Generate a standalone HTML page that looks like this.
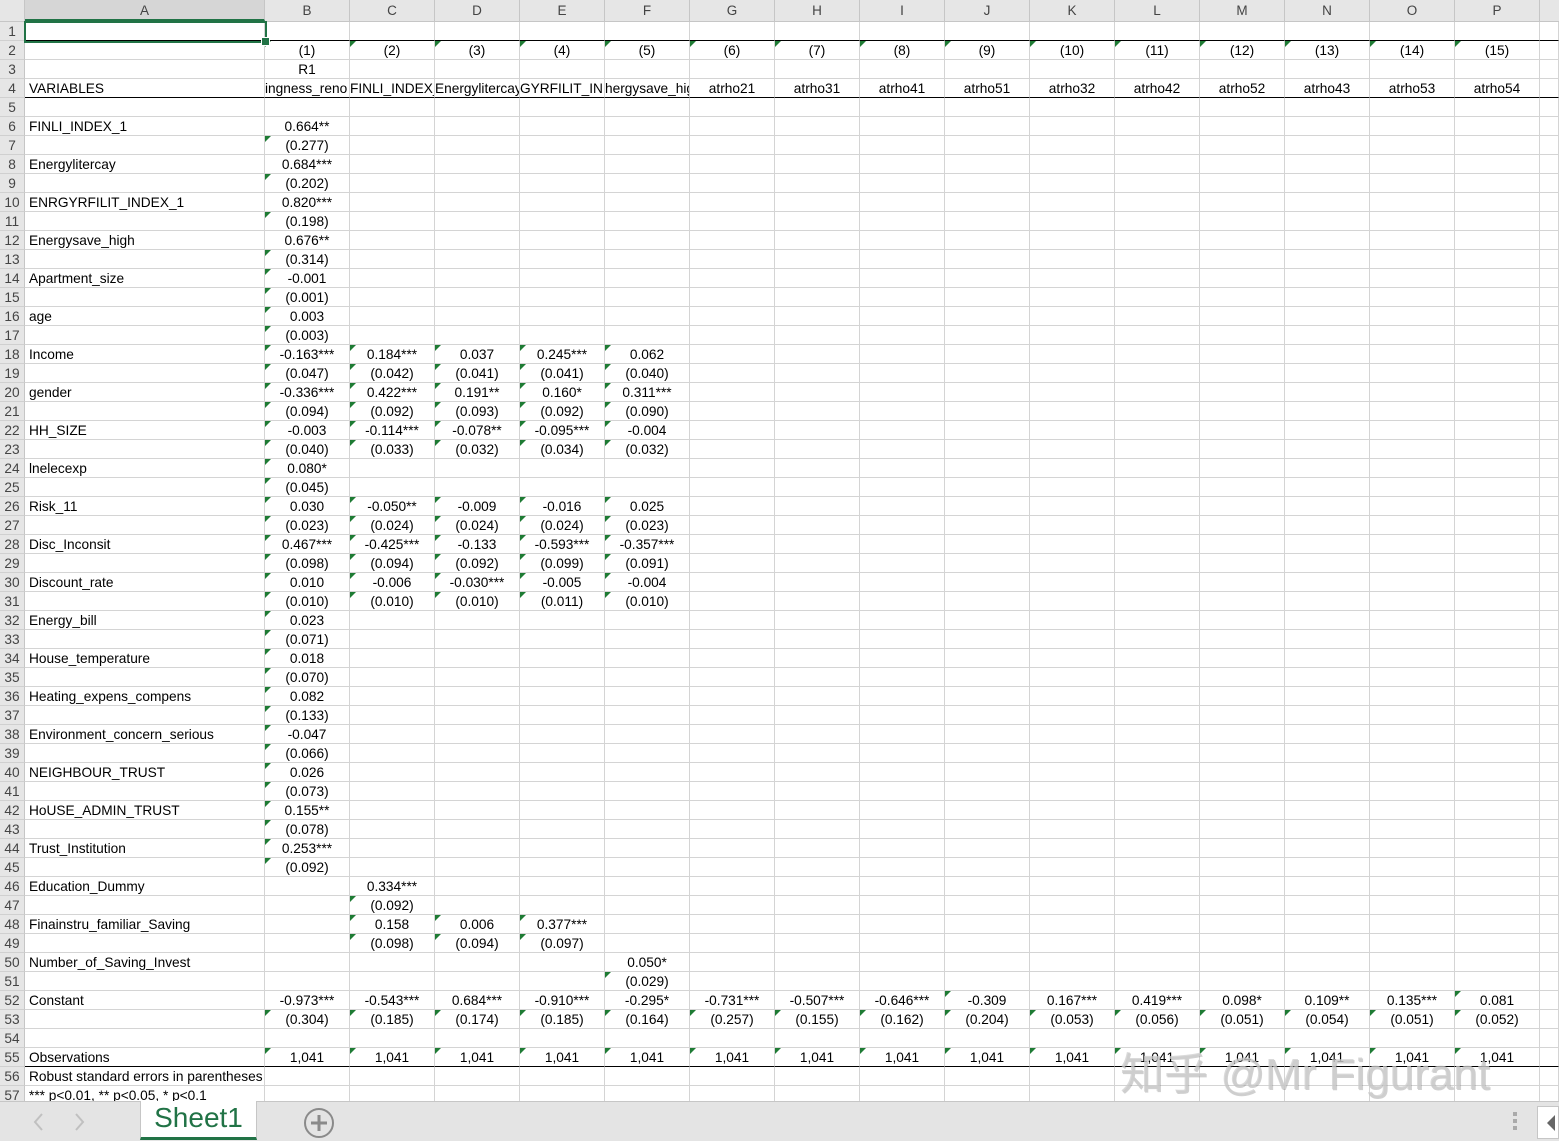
<!DOCTYPE html>
<html><head><meta charset="utf-8"><style>
*{margin:0;padding:0;box-sizing:border-box}
body{width:1559px;height:1141px;overflow:hidden;background:#fff;font-family:"Liberation Sans",Arial,sans-serif;font-size:13.7px;color:#000;position:relative}
.h{display:flex;height:22px;background:#e6e6e6;border-bottom:1px solid #c6c6c6}
.h span{display:block;border-right:1px solid #c6c6c6;text-align:center;line-height:21px;color:#444;font-size:13.5px}
.r{display:flex;height:19px}
.r i,.r u,.r em,.r b{display:block;height:19px;line-height:19px;font-style:normal;text-decoration:none;font-weight:normal;border-right:1px solid #d4d4d4;border-bottom:1px solid #d4d4d4;white-space:nowrap;overflow:hidden;position:relative}
.r i{width:25px;background:#e6e6e6;color:#444;text-align:center;border-right:1px solid #c6c6c6;border-bottom:1px solid #d0d0d0}
.r u{width:240px;padding-left:4px;overflow:visible;z-index:1}
.r em{width:85px;text-align:center}
.r b{width:19px}
.r em.t::before{content:"";position:absolute;left:0;top:0;border-top:6px solid #1e7b34;border-right:6px solid transparent}
.k u,.k em,.k b{border-bottom:1px solid #000}
#sel{position:absolute;left:24px;top:21px;width:243px;height:22px;border:2px solid #217346;z-index:3}
#sel::after{content:"";position:absolute;right:-5px;bottom:-5px;width:7px;height:7px;background:#217346;border:1px solid #fff}
#tabs{position:absolute;left:0;top:1101px;width:1559px;height:40px;background:#e4e4e4;border-top:1px solid #c6c6c6;z-index:4}
#sheet{position:absolute;left:140px;top:-1px;width:117px;height:39px;background:#fff;border:1px solid #c6c6c6;border-top:none;border-bottom:3px solid #217346;color:#217346;font-size:28px;text-align:center;line-height:34px}
#wm{position:absolute;left:1120px;top:1038px;font-size:44px;color:rgba(205,205,205,0.75);text-shadow:1px 1px 0 rgba(120,120,120,0.35);z-index:5;font-family:"Liberation Sans","Noto Sans CJK SC",sans-serif;white-space:nowrap}
</style></head><body>
<div class="h"><span style="width:25px"></span><span style="width:240px;background:#d6d6d6;border-bottom:2px solid #217346">A</span><span style="width:85px">B</span><span style="width:85px">C</span><span style="width:85px">D</span><span style="width:85px">E</span><span style="width:85px">F</span><span style="width:85px">G</span><span style="width:85px">H</span><span style="width:85px">I</span><span style="width:85px">J</span><span style="width:85px">K</span><span style="width:85px">L</span><span style="width:85px">M</span><span style="width:85px">N</span><span style="width:85px">O</span><span style="width:85px">P</span><span style="width:19px;border:none"></span></div>
<div class="r k"><i>1</i><u></u><em></em><em></em><em></em><em></em><em></em><em></em><em></em><em></em><em></em><em></em><em></em><em></em><em></em><em></em><em></em><b></b></div>
<div class="r"><i>2</i><u></u><em class=t>(1)</em><em class=t>(2)</em><em class=t>(3)</em><em class=t>(4)</em><em class=t>(5)</em><em class=t>(6)</em><em class=t>(7)</em><em class=t>(8)</em><em class=t>(9)</em><em class=t>(10)</em><em class=t>(11)</em><em class=t>(12)</em><em class=t>(13)</em><em class=t>(14)</em><em class=t>(15)</em><b></b></div>
<div class="r"><i>3</i><u></u><em>R1</em><em></em><em></em><em></em><em></em><em></em><em></em><em></em><em></em><em></em><em></em><em></em><em></em><em></em><em></em><b></b></div>
<div class="r k"><i>4</i><u>VARIABLES</u><em style="text-align:left">ingness_reno</em><em style="text-align:left">FINLI_INDEX_1</em><em style="text-align:left">Energylitercay</em><em style="text-align:left">GYRFILIT_IND</em><em style="text-align:left">hergysave_hig</em><em>atrho21</em><em>atrho31</em><em>atrho41</em><em>atrho51</em><em>atrho32</em><em>atrho42</em><em>atrho52</em><em>atrho43</em><em>atrho53</em><em>atrho54</em><b></b></div>
<div class="r"><i>5</i><u></u><em></em><em></em><em></em><em></em><em></em><em></em><em></em><em></em><em></em><em></em><em></em><em></em><em></em><em></em><em></em><b></b></div>
<div class="r"><i>6</i><u>FINLI_INDEX_1</u><em>0.664**</em><em></em><em></em><em></em><em></em><em></em><em></em><em></em><em></em><em></em><em></em><em></em><em></em><em></em><em></em><b></b></div>
<div class="r"><i>7</i><u></u><em class=t>(0.277)</em><em></em><em></em><em></em><em></em><em></em><em></em><em></em><em></em><em></em><em></em><em></em><em></em><em></em><em></em><b></b></div>
<div class="r"><i>8</i><u>Energylitercay</u><em>0.684***</em><em></em><em></em><em></em><em></em><em></em><em></em><em></em><em></em><em></em><em></em><em></em><em></em><em></em><em></em><b></b></div>
<div class="r"><i>9</i><u></u><em class=t>(0.202)</em><em></em><em></em><em></em><em></em><em></em><em></em><em></em><em></em><em></em><em></em><em></em><em></em><em></em><em></em><b></b></div>
<div class="r"><i>10</i><u>ENRGYRFILIT_INDEX_1</u><em>0.820***</em><em></em><em></em><em></em><em></em><em></em><em></em><em></em><em></em><em></em><em></em><em></em><em></em><em></em><em></em><b></b></div>
<div class="r"><i>11</i><u></u><em class=t>(0.198)</em><em></em><em></em><em></em><em></em><em></em><em></em><em></em><em></em><em></em><em></em><em></em><em></em><em></em><em></em><b></b></div>
<div class="r"><i>12</i><u>Energysave_high</u><em>0.676**</em><em></em><em></em><em></em><em></em><em></em><em></em><em></em><em></em><em></em><em></em><em></em><em></em><em></em><em></em><b></b></div>
<div class="r"><i>13</i><u></u><em class=t>(0.314)</em><em></em><em></em><em></em><em></em><em></em><em></em><em></em><em></em><em></em><em></em><em></em><em></em><em></em><em></em><b></b></div>
<div class="r"><i>14</i><u>Apartment_size</u><em class=t>-0.001</em><em></em><em></em><em></em><em></em><em></em><em></em><em></em><em></em><em></em><em></em><em></em><em></em><em></em><em></em><b></b></div>
<div class="r"><i>15</i><u></u><em class=t>(0.001)</em><em></em><em></em><em></em><em></em><em></em><em></em><em></em><em></em><em></em><em></em><em></em><em></em><em></em><em></em><b></b></div>
<div class="r"><i>16</i><u>age</u><em class=t>0.003</em><em></em><em></em><em></em><em></em><em></em><em></em><em></em><em></em><em></em><em></em><em></em><em></em><em></em><em></em><b></b></div>
<div class="r"><i>17</i><u></u><em class=t>(0.003)</em><em></em><em></em><em></em><em></em><em></em><em></em><em></em><em></em><em></em><em></em><em></em><em></em><em></em><em></em><b></b></div>
<div class="r"><i>18</i><u>Income</u><em class=t>-0.163***</em><em class=t>0.184***</em><em class=t>0.037</em><em class=t>0.245***</em><em class=t>0.062</em><em></em><em></em><em></em><em></em><em></em><em></em><em></em><em></em><em></em><em></em><b></b></div>
<div class="r"><i>19</i><u></u><em class=t>(0.047)</em><em class=t>(0.042)</em><em class=t>(0.041)</em><em class=t>(0.041)</em><em class=t>(0.040)</em><em></em><em></em><em></em><em></em><em></em><em></em><em></em><em></em><em></em><em></em><b></b></div>
<div class="r"><i>20</i><u>gender</u><em class=t>-0.336***</em><em class=t>0.422***</em><em class=t>0.191**</em><em class=t>0.160*</em><em class=t>0.311***</em><em></em><em></em><em></em><em></em><em></em><em></em><em></em><em></em><em></em><em></em><b></b></div>
<div class="r"><i>21</i><u></u><em class=t>(0.094)</em><em class=t>(0.092)</em><em class=t>(0.093)</em><em class=t>(0.092)</em><em class=t>(0.090)</em><em></em><em></em><em></em><em></em><em></em><em></em><em></em><em></em><em></em><em></em><b></b></div>
<div class="r"><i>22</i><u>HH_SIZE</u><em class=t>-0.003</em><em class=t>-0.114***</em><em class=t>-0.078**</em><em class=t>-0.095***</em><em class=t>-0.004</em><em></em><em></em><em></em><em></em><em></em><em></em><em></em><em></em><em></em><em></em><b></b></div>
<div class="r"><i>23</i><u></u><em class=t>(0.040)</em><em class=t>(0.033)</em><em class=t>(0.032)</em><em class=t>(0.034)</em><em class=t>(0.032)</em><em></em><em></em><em></em><em></em><em></em><em></em><em></em><em></em><em></em><em></em><b></b></div>
<div class="r"><i>24</i><u>lnelecexp</u><em class=t>0.080*</em><em></em><em></em><em></em><em></em><em></em><em></em><em></em><em></em><em></em><em></em><em></em><em></em><em></em><em></em><b></b></div>
<div class="r"><i>25</i><u></u><em class=t>(0.045)</em><em></em><em></em><em></em><em></em><em></em><em></em><em></em><em></em><em></em><em></em><em></em><em></em><em></em><em></em><b></b></div>
<div class="r"><i>26</i><u>Risk_11</u><em class=t>0.030</em><em class=t>-0.050**</em><em class=t>-0.009</em><em class=t>-0.016</em><em class=t>0.025</em><em></em><em></em><em></em><em></em><em></em><em></em><em></em><em></em><em></em><em></em><b></b></div>
<div class="r"><i>27</i><u></u><em class=t>(0.023)</em><em class=t>(0.024)</em><em class=t>(0.024)</em><em class=t>(0.024)</em><em class=t>(0.023)</em><em></em><em></em><em></em><em></em><em></em><em></em><em></em><em></em><em></em><em></em><b></b></div>
<div class="r"><i>28</i><u>Disc_Inconsit</u><em class=t>0.467***</em><em class=t>-0.425***</em><em class=t>-0.133</em><em class=t>-0.593***</em><em class=t>-0.357***</em><em></em><em></em><em></em><em></em><em></em><em></em><em></em><em></em><em></em><em></em><b></b></div>
<div class="r"><i>29</i><u></u><em class=t>(0.098)</em><em class=t>(0.094)</em><em class=t>(0.092)</em><em class=t>(0.099)</em><em class=t>(0.091)</em><em></em><em></em><em></em><em></em><em></em><em></em><em></em><em></em><em></em><em></em><b></b></div>
<div class="r"><i>30</i><u>Discount_rate</u><em class=t>0.010</em><em class=t>-0.006</em><em class=t>-0.030***</em><em class=t>-0.005</em><em class=t>-0.004</em><em></em><em></em><em></em><em></em><em></em><em></em><em></em><em></em><em></em><em></em><b></b></div>
<div class="r"><i>31</i><u></u><em class=t>(0.010)</em><em class=t>(0.010)</em><em class=t>(0.010)</em><em class=t>(0.011)</em><em class=t>(0.010)</em><em></em><em></em><em></em><em></em><em></em><em></em><em></em><em></em><em></em><em></em><b></b></div>
<div class="r"><i>32</i><u>Energy_bill</u><em class=t>0.023</em><em></em><em></em><em></em><em></em><em></em><em></em><em></em><em></em><em></em><em></em><em></em><em></em><em></em><em></em><b></b></div>
<div class="r"><i>33</i><u></u><em class=t>(0.071)</em><em></em><em></em><em></em><em></em><em></em><em></em><em></em><em></em><em></em><em></em><em></em><em></em><em></em><em></em><b></b></div>
<div class="r"><i>34</i><u>House_temperature</u><em class=t>0.018</em><em></em><em></em><em></em><em></em><em></em><em></em><em></em><em></em><em></em><em></em><em></em><em></em><em></em><em></em><b></b></div>
<div class="r"><i>35</i><u></u><em class=t>(0.070)</em><em></em><em></em><em></em><em></em><em></em><em></em><em></em><em></em><em></em><em></em><em></em><em></em><em></em><em></em><b></b></div>
<div class="r"><i>36</i><u>Heating_expens_compens</u><em class=t>0.082</em><em></em><em></em><em></em><em></em><em></em><em></em><em></em><em></em><em></em><em></em><em></em><em></em><em></em><em></em><b></b></div>
<div class="r"><i>37</i><u></u><em class=t>(0.133)</em><em></em><em></em><em></em><em></em><em></em><em></em><em></em><em></em><em></em><em></em><em></em><em></em><em></em><em></em><b></b></div>
<div class="r"><i>38</i><u>Environment_concern_serious</u><em class=t>-0.047</em><em></em><em></em><em></em><em></em><em></em><em></em><em></em><em></em><em></em><em></em><em></em><em></em><em></em><em></em><b></b></div>
<div class="r"><i>39</i><u></u><em class=t>(0.066)</em><em></em><em></em><em></em><em></em><em></em><em></em><em></em><em></em><em></em><em></em><em></em><em></em><em></em><em></em><b></b></div>
<div class="r"><i>40</i><u>NEIGHBOUR_TRUST</u><em class=t>0.026</em><em></em><em></em><em></em><em></em><em></em><em></em><em></em><em></em><em></em><em></em><em></em><em></em><em></em><em></em><b></b></div>
<div class="r"><i>41</i><u></u><em class=t>(0.073)</em><em></em><em></em><em></em><em></em><em></em><em></em><em></em><em></em><em></em><em></em><em></em><em></em><em></em><em></em><b></b></div>
<div class="r"><i>42</i><u>HoUSE_ADMIN_TRUST</u><em class=t>0.155**</em><em></em><em></em><em></em><em></em><em></em><em></em><em></em><em></em><em></em><em></em><em></em><em></em><em></em><em></em><b></b></div>
<div class="r"><i>43</i><u></u><em class=t>(0.078)</em><em></em><em></em><em></em><em></em><em></em><em></em><em></em><em></em><em></em><em></em><em></em><em></em><em></em><em></em><b></b></div>
<div class="r"><i>44</i><u>Trust_Institution</u><em class=t>0.253***</em><em></em><em></em><em></em><em></em><em></em><em></em><em></em><em></em><em></em><em></em><em></em><em></em><em></em><em></em><b></b></div>
<div class="r"><i>45</i><u></u><em class=t>(0.092)</em><em></em><em></em><em></em><em></em><em></em><em></em><em></em><em></em><em></em><em></em><em></em><em></em><em></em><em></em><b></b></div>
<div class="r"><i>46</i><u>Education_Dummy</u><em></em><em>0.334***</em><em></em><em></em><em></em><em></em><em></em><em></em><em></em><em></em><em></em><em></em><em></em><em></em><em></em><b></b></div>
<div class="r"><i>47</i><u></u><em></em><em class=t>(0.092)</em><em></em><em></em><em></em><em></em><em></em><em></em><em></em><em></em><em></em><em></em><em></em><em></em><em></em><b></b></div>
<div class="r"><i>48</i><u>Finainstru_familiar_Saving</u><em></em><em class=t>0.158</em><em class=t>0.006</em><em class=t>0.377***</em><em></em><em></em><em></em><em></em><em></em><em></em><em></em><em></em><em></em><em></em><em></em><b></b></div>
<div class="r"><i>49</i><u></u><em></em><em class=t>(0.098)</em><em class=t>(0.094)</em><em class=t>(0.097)</em><em></em><em></em><em></em><em></em><em></em><em></em><em></em><em></em><em></em><em></em><em></em><b></b></div>
<div class="r"><i>50</i><u>Number_of_Saving_Invest</u><em></em><em></em><em></em><em></em><em>0.050*</em><em></em><em></em><em></em><em></em><em></em><em></em><em></em><em></em><em></em><em></em><b></b></div>
<div class="r"><i>51</i><u></u><em></em><em></em><em></em><em></em><em class=t>(0.029)</em><em></em><em></em><em></em><em></em><em></em><em></em><em></em><em></em><em></em><em></em><b></b></div>
<div class="r"><i>52</i><u>Constant</u><em>-0.973***</em><em>-0.543***</em><em>0.684***</em><em>-0.910***</em><em>-0.295*</em><em>-0.731***</em><em>-0.507***</em><em>-0.646***</em><em class=t>-0.309</em><em>0.167***</em><em>0.419***</em><em>0.098*</em><em>0.109**</em><em>0.135***</em><em class=t>0.081</em><b></b></div>
<div class="r"><i>53</i><u></u><em class=t>(0.304)</em><em class=t>(0.185)</em><em class=t>(0.174)</em><em class=t>(0.185)</em><em class=t>(0.164)</em><em class=t>(0.257)</em><em class=t>(0.155)</em><em class=t>(0.162)</em><em class=t>(0.204)</em><em class=t>(0.053)</em><em class=t>(0.056)</em><em class=t>(0.051)</em><em class=t>(0.054)</em><em class=t>(0.051)</em><em class=t>(0.052)</em><b></b></div>
<div class="r"><i>54</i><u></u><em></em><em></em><em></em><em></em><em></em><em></em><em></em><em></em><em></em><em></em><em></em><em></em><em></em><em></em><em></em><b></b></div>
<div class="r k"><i>55</i><u>Observations</u><em class=t>1,041</em><em class=t>1,041</em><em class=t>1,041</em><em class=t>1,041</em><em class=t>1,041</em><em class=t>1,041</em><em class=t>1,041</em><em class=t>1,041</em><em class=t>1,041</em><em class=t>1,041</em><em class=t>1,041</em><em class=t>1,041</em><em class=t>1,041</em><em class=t>1,041</em><em class=t>1,041</em><b></b></div>
<div class="r"><i>56</i><u>Robust standard errors in parentheses</u><em></em><em></em><em></em><em></em><em></em><em></em><em></em><em></em><em></em><em></em><em></em><em></em><em></em><em></em><em></em><b></b></div>
<div class="r"><i>57</i><u>*** p&lt;0.01, ** p&lt;0.05, * p&lt;0.1</u><em></em><em></em><em></em><em></em><em></em><em></em><em></em><em></em><em></em><em></em><em></em><em></em><em></em><em></em><em></em><b></b></div>
<div id="sel"></div>
<div id="wm">知乎 @Mr Figurant</div>
<div id="tabs">
<svg width="120" height="40" style="position:absolute;left:0;top:0"><path d="M42 12 L35 20 L42 28" fill="none" stroke="#c0c0c0" stroke-width="2"/><path d="M76 12 L83 20 L76 28" fill="none" stroke="#c0c0c0" stroke-width="2"/></svg>
<div id="sheet">Sheet1</div>
<svg width="36" height="36" style="position:absolute;left:301px;top:3px"><circle cx="18" cy="18" r="14" fill="none" stroke="#8a8a8a" stroke-width="2"/><path d="M18 10 V26 M10 18 H26" stroke="#8a8a8a" stroke-width="3"/></svg>
<div style="position:absolute;left:1513px;top:10px;width:4px;height:4px;background:#aaa;box-shadow:0 7px 0 #aaa,0 14px 0 #aaa"></div>
<div style="position:absolute;left:1537px;top:4px;width:22px;height:33px;background:#fff;border:1px solid #c6c6c6"></div>
<svg width="12" height="20" style="position:absolute;left:1545px;top:11px"><path d="M10 2 L2 10 L10 18 Z" fill="#666"/></svg>
</div>
</body></html>
